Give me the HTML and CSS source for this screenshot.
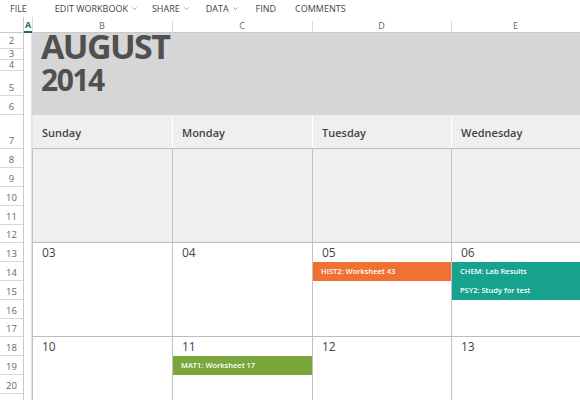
FILE: index.html
```html
<!DOCTYPE html>
<html>
<head>
<meta charset="utf-8">
<link rel="stylesheet" href="styles.css">
</head>
<body>
<div class="menubar">
  <span class="menu m-file">FILE</span>
  <span class="menu m-edit">EDIT WORKBOOK<svg class="caret" width="5" height="3" viewBox="0 0 5 3"><path d="M0.5 0.5 L2.5 2.5 L4.5 0.5" fill="none" stroke="#8a8a8a" stroke-width="0.8"/></svg></span>
  <span class="menu m-share">SHARE<svg class="caret" width="5" height="3" viewBox="0 0 5 3"><path d="M0.5 0.5 L2.5 2.5 L4.5 0.5" fill="none" stroke="#8a8a8a" stroke-width="0.8"/></svg></span>
  <span class="menu m-data">DATA<svg class="caret" width="5" height="3" viewBox="0 0 5 3"><path d="M0.5 0.5 L2.5 2.5 L4.5 0.5" fill="none" stroke="#8a8a8a" stroke-width="0.8"/></svg></span>
  <span class="menu m-find">FIND</span>
  <span class="menu m-comments">COMMENTS</span>
</div>

<div class="colheads">
  <div class="corner"></div>
  <div class="colhead col-a">A</div>
  <div class="colhead">B</div>
  <div class="colhead">C</div>
  <div class="colhead">D</div>
  <div class="colhead">E</div>
</div>

<div class="sheet">
  <div class="rowheads">
    <div class="rh h16">2</div>
    <div class="rh h11">3</div>
    <div class="rh h11">4</div>
    <div class="rh h25">5</div>
    <div class="rh h19">6</div>
    <div class="rh h34">7</div>
    <div class="rh h19">8</div>
    <div class="rh h19">9</div>
    <div class="rh h19">10</div>
    <div class="rh h19">11</div>
    <div class="rh h18">12</div>
    <div class="rh h19">13</div>
    <div class="rh h19">14</div>
    <div class="rh h19">15</div>
    <div class="rh h19">16</div>
    <div class="rh h18">17</div>
    <div class="rh h19">18</div>
    <div class="rh h19">19</div>
    <div class="rh h19">20</div>
    <div class="rh h19"></div>
  </div>
  <div class="col-a-body"></div>
  <div class="calendar">
    <div class="title">
      <div class="month">AUGUST</div>
      <div class="year">2014</div>
    </div>
    <div class="dayhead">
      <div class="dayname">Sunday</div>
      <div class="dayname">Monday</div>
      <div class="dayname">Tuesday</div>
      <div class="dayname">Wednesday</div>
    </div>
    <div class="week blank">
      <div class="cell"></div>
      <div class="cell"></div>
      <div class="cell"></div>
      <div class="cell"></div>
    </div>
    <div class="week">
      <div class="cell"><div class="date">03</div></div>
      <div class="cell"><div class="date">04</div></div>
      <div class="cell"><div class="date">05</div><div class="event orange">HIST2: Worksheet 43</div></div>
      <div class="cell"><div class="date">06</div><div class="event teal">CHEM: Lab Results</div><div class="event teal">PSY2: Study for test</div></div>
    </div>
    <div class="week last">
      <div class="cell"><div class="date">10</div></div>
      <div class="cell"><div class="date">11</div><div class="event green">MAT1: Worksheet 17</div></div>
      <div class="cell"><div class="date">12</div></div>
      <div class="cell"><div class="date">13</div></div>
    </div>
  </div>
</div>
</body>
</html>
```

FILE: styles.css
```css
* { box-sizing: border-box; }
html, body {
  margin: 0;
  padding: 0;
  background: #ffffff;
  width: 580px;
  height: 400px;
  overflow: hidden;
  font-family: "Open Sans", "Noto Sans", sans-serif;
}

/* menu bar */
.menubar {
  height: 17px;
  display: flex;
  align-items: center;
  padding-left: 10px;
  font-size: 9px;
  color: #444444;
  white-space: nowrap;
}
.menu { display: inline-flex; align-items: center; }
.caret { margin-left: 4px; }
.m-edit { margin-left: 28px; }
.m-share { margin-left: 15px; }
.m-data { margin-left: 17px; }
.m-find { margin-left: 18px; }
.m-comments { margin-left: 19px; }

/* column headers */
.colheads {
  height: 16px;
  display: grid;
  grid-template-columns: 24px 8px 140px 140px 139px 1fr;
  border-bottom: 1px solid #c8c8c8;
  font-size: 9px;
  color: #666666;
}
.corner { border-right: 1px solid #c8c8c8; }
.colhead {
  display: flex;
  align-items: center;
  justify-content: center;
  position: relative;
}
.colhead + .colhead::before {
  content: "";
  position: absolute;
  left: 0;
  top: 4px;
  bottom: 0;
  border-left: 1px solid #dadada;
}
.col-a {
  color: #217346;
  font-weight: 700;
  border-bottom: 2px solid #217346;
  padding-top: 1px;
}
.col-a + .colhead::before { top: 0; }

/* sheet */
.sheet {
  display: flex;
  height: 367px;
}
.rowheads {
  width: 24px;
  border-right: 1px solid #c8c8c8;
  display: flex;
  flex-direction: column;
  flex: none;
}
.rh {
  display: flex;
  align-items: flex-end;
  justify-content: center;
  font-size: 9.5px;
  line-height: 12px;
  color: #666666;
  border-bottom: 1px solid #d8d8d8;
  padding-bottom: 1px;
  flex: none;
}
.h11 { height: 11px; padding-bottom: 0; line-height: 10px; font-size: 9px; }
.h16 { height: 16px; }
.h18 { height: 18px; }
.h19 { height: 19px; }
.h25 { height: 25px; }
.h34 { height: 34px; }

.col-a-body {
  width: 8px;
  flex: none;
  border-right: 1px solid #e2e2e2;
}

/* calendar */
.calendar {
  flex: 1;
  display: flex;
  flex-direction: column;
  min-width: 0;
}
.title {
  height: 82px;
  background: #d6d6d6;
  padding-left: 9px;
  color: #505050;
  font-weight: 700;
  flex: none;
}
.month {
  font-size: 34px;
  line-height: 26px;
  letter-spacing: -1.6px;
}
.year {
  font-size: 30px;
  line-height: 24px;
  margin-top: 9px;
  letter-spacing: -1.5px;
}

.dayhead {
  height: 34px;
  flex: none;
  display: grid;
  grid-template-columns: 139px 140px 139px 1fr;
  background: #efefef;
  border-bottom: 1px solid #bdbdbd;
  border-left: 1px solid #e6e6e6;
}
.dayname {
  display: flex;
  align-items: center;
  padding-left: 9px;
  padding-top: 2px;
  font-size: 11px;
  font-weight: 600;
  color: #444444;
}
.dayname + .dayname { border-left: 1px solid #ffffff; }

.week {
  height: 94px;
  flex: none;
  display: grid;
  grid-template-columns: 140px 140px 139px 1fr;
  border-bottom: 1px solid #bdbdbd;
}
.week.last { flex: 1; border-bottom: none; }
.cell {
  border-left: 1px solid #c3c3c3;
  display: flex;
  flex-direction: column;
}
.blank .cell { background: #efefef; }
.date {
  height: 19px;
  padding-top: 3px;
  padding-left: 9px;
  font-size: 12px;
  line-height: 14px;
  color: #444444;
}
.event {
  height: 19px;
  line-height: 19px;
  padding-left: 8px;
  font-size: 7.5px;
  font-weight: 600;
  color: #ffffff;
  white-space: nowrap;
}
.orange { background: #f07131; }
.teal { background: #17a28d; }
.green { background: #79a73b; }
```
